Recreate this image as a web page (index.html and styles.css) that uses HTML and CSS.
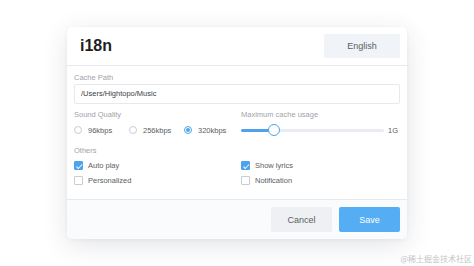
FILE: index.html
```html
<!DOCTYPE html>
<html lang="en">
<head>
    <meta charset="UTF-8">
    <meta name="viewport" content="width=device-width, initial-scale=1.0">
    <title>i18n</title>
    <link rel="stylesheet" href="styles.css">
</head>
<body>
    <div class="dialog">
        <div class="dialog-header">
            <h1>i18n</h1>
            <button class="lang-btn">English</button>
        </div>

        <div class="dialog-body">
            <div class="field">
                <div class="field-label">Cache Path</div>
                <div class="text-input">/Users/Hightopo/Music</div>
            </div>

            <div class="field-grid">
                <div class="field">
                    <div class="field-label">Sound Quality</div>
                    <div class="radio-group">
                        <label class="radio"><span class="radio-dot"></span>96kbps</label>
                        <label class="radio"><span class="radio-dot"></span>256kbps</label>
                        <label class="radio checked"><span class="radio-dot"></span>320kbps</label>
                    </div>
                </div>
                <div class="field">
                    <div class="field-label">Maximum cache usage</div>
                    <div class="slider-row">
                        <div class="slider-track">
                            <div class="slider-fill" style="width: 23%;"></div>
                            <div class="slider-knob" style="left: 23%;"></div>
                        </div>
                        <span class="slider-value">1G</span>
                    </div>
                </div>
            </div>

            <div class="field others">
                <div class="field-label">Others</div>
                <div class="check-grid">
                    <label class="check checked"><span class="check-box"></span>Auto play</label>
                    <label class="check checked"><span class="check-box"></span>Show lyrics</label>
                    <label class="check"><span class="check-box"></span>Personalized</label>
                    <label class="check"><span class="check-box"></span>Notification</label>
                </div>
            </div>
        </div>

        <div class="dialog-footer">
            <button class="btn btn-cancel">Cancel</button>
            <button class="btn btn-save">Save</button>
        </div>
    </div>

    <div class="watermark">@稀土掘金技术社区</div>
</body>
</html>
```

FILE: styles.css
```css
:root {
    --blue: #4ea3ec;
    --text: #5a5e63;
    --muted: #a0a3a8;
    --border: #e6e9ee;
}

* {
    margin: 0;
    padding: 0;
    box-sizing: border-box;
}

body {
    font-family: 'Liberation Sans', Arial, sans-serif;
    background: #ffffff;
    color: var(--text);
    height: 100vh;
    display: flex;
    align-items: center;
    justify-content: center;
    overflow: hidden;
}

.dialog {
    width: 340px;
    height: 212px;
    background: #ffffff;
    border-radius: 5px;
    box-shadow: 0 6px 26px rgba(40, 50, 70, 0.13), 0 1px 4px rgba(40, 50, 70, 0.05);
    display: flex;
    flex-direction: column;
    overflow: hidden;
}

.dialog-header {
    height: 39px;
    border-bottom: 1px solid var(--border);
    display: flex;
    align-items: center;
    justify-content: space-between;
    padding: 0 7px 0 13px;
}

.dialog-header h1 {
    font-size: 16px;
    font-weight: 700;
    color: #1d1f22;
}

.lang-btn {
    width: 76px;
    height: 24px;
    border: none;
    border-radius: 2px;
    background: #f0f3f7;
    color: var(--text);
    font-family: inherit;
    font-size: 9px;
}

.dialog-body {
    flex: 1;
    padding: 6px 7px 0;
}

.field-label {
    height: 12px;
    line-height: 12px;
    font-size: 7.5px;
    color: var(--muted);
}

.text-input {
    height: 20px;
    border: 1px solid var(--border);
    border-radius: 2px;
    padding: 0 6px;
    line-height: 18px;
    font-size: 7.5px;
    color: #3c4045;
}

.field-grid {
    display: grid;
    grid-template-columns: minmax(0, 1fr) minmax(0, 1fr);
    column-gap: 8px;
    margin-top: 5px;
}

.radio-group {
    display: flex;
    align-items: center;
    height: 16px;
    margin-top: 1px;
}

.radio {
    flex: 0 0 55px;
    display: flex;
    align-items: center;
    gap: 6px;
    font-size: 7.5px;
    white-space: nowrap;
}

.radio-dot {
    width: 8px;
    height: 8px;
    border-radius: 50%;
    border: 1px solid #c8ccd2;
    background: #fff;
    display: flex;
    align-items: center;
    justify-content: center;
}

.radio.checked .radio-dot {
    border-color: var(--blue);
}

.radio.checked .radio-dot::after {
    content: "";
    width: 4px;
    height: 4px;
    border-radius: 50%;
    background: var(--blue);
}

.slider-row {
    display: flex;
    align-items: center;
    height: 16px;
    margin-top: 1px;
    padding-right: 2px;
}

.slider-track {
    flex: 1;
    height: 3px;
    border-radius: 2px;
    background: #e9edf2;
    position: relative;
}

.slider-fill {
    height: 100%;
    border-radius: 2px;
    background: var(--blue);
}

.slider-knob {
    position: absolute;
    top: 50%;
    width: 12px;
    height: 12px;
    margin: -6px 0 0 -6px;
    border-radius: 50%;
    border: 1.5px solid var(--blue);
    background: #fff;
}

.slider-value {
    margin-left: 4px;
    font-size: 7.5px;
}

.others {
    margin-top: 7px;
}

.check-grid {
    display: grid;
    grid-template-columns: minmax(0, 1fr) minmax(0, 1fr);
    column-gap: 8px;
    margin-top: 1px;
}

.check {
    height: 15px;
    display: flex;
    align-items: center;
    gap: 5px;
    font-size: 7.5px;
}

.check-box {
    width: 9px;
    height: 9px;
    border: 1px solid #c8ccd2;
    border-radius: 1px;
    background: #fff;
    position: relative;
}

.check.checked .check-box {
    background: var(--blue);
    border-color: var(--blue);
}

.check.checked .check-box::after {
    content: "";
    position: absolute;
    left: 2.5px;
    top: 0.5px;
    width: 2px;
    height: 4.5px;
    border: solid #fff;
    border-width: 0 1.2px 1.2px 0;
    transform: rotate(45deg);
}

.dialog-footer {
    height: 40px;
    border-top: 1px solid var(--border);
    background: #fafbfc;
    display: flex;
    align-items: center;
    justify-content: flex-end;
    gap: 7px;
    padding: 0 7px;
}

.btn {
    width: 61px;
    height: 25px;
    border: none;
    border-radius: 2px;
    font-family: inherit;
    font-size: 9px;
}

.btn-cancel {
    background: #eef0f3;
    color: var(--text);
}

.btn-save {
    background: #55aef4;
    color: #ffffff;
}

.watermark {
    position: absolute;
    right: 2px;
    bottom: 2px;
    font-family: 'Noto Sans CJK SC', sans-serif;
    font-size: 8px;
    color: #c2c4c8;
}
```
